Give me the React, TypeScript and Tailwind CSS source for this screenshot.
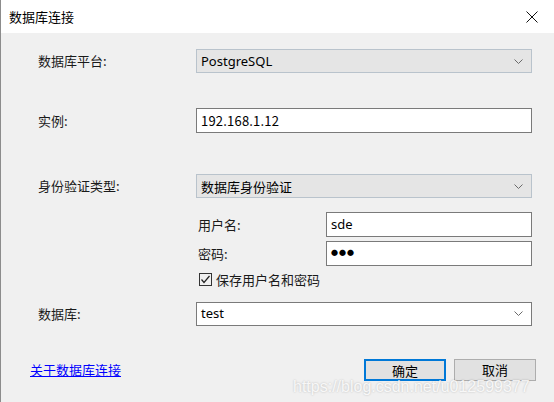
import React from 'react';

const cjk = "font-['Microsoft_YaHei','Noto_Sans_CJK_SC',sans-serif]";
const ui = "font-['Segoe_UI','Noto_Sans','Noto_Sans_CJK_SC',sans-serif]";

function Chevron() {
  return (
    <svg width="9" height="5" viewBox="0 0 9 5" className="shrink-0">
      <polyline points="0.5,0.5 4.5,4.5 8.5,0.5" fill="none" stroke="#6a6a6a" strokeWidth="1" />
    </svg>
  );
}

function Select({ value, editable, className }: { value: string; editable?: boolean; className?: string }) {
  return (
    <div
      className={`flex h-[24px] w-[336px] items-center justify-between pl-[4px] pr-[8px] text-[13px] text-black ${
        editable ? 'border border-[#7a7a7a] bg-white' : 'border border-[#b9c3cc] bg-[#e5e5e5]'
      } ${className ?? ''}`}
    >
      <span className="leading-none">{value}</span>
      <Chevron />
    </div>
  );
}

function Field({ children, width, className }: { children: React.ReactNode; width: string; className?: string }) {
  return (
    <div className={`flex h-[25px] items-center border border-[#7a7a7a] bg-white pl-[4px] text-[13px] text-black ${width} ${className ?? ''}`}>
      {children}
    </div>
  );
}

function Row({ label, children, className }: { label: string; children: React.ReactNode; className?: string }) {
  return (
    <div className={`flex items-center ${className ?? ''}`}>
      <div className={`w-[195px] shrink-0 pl-[37px] text-[13px] text-[#1a1a1a] ${cjk}`}>{label}</div>
      {children}
    </div>
  );
}

export default function App() {
  return (
    <div className={`relative h-[402px] w-[554px] overflow-hidden border-l border-[#8c8c8c] bg-[#f0f0f0] ${ui}`}>
      {/* title bar */}
      <div className="flex h-[33px] items-center justify-between bg-white pl-[8px] pr-[16px]">
        <span className={`text-[13px] text-black ${cjk}`}>数据库连接</span>
        <svg width="12" height="12" viewBox="0 0 12 12">
          <path d="M0.5 0.5 L11.5 11.5 M11.5 0.5 L0.5 11.5" stroke="#111" strokeWidth="1" />
        </svg>
      </div>

      <Row label="数据库平台:" className="mt-[16px]">
        <Select value="PostgreSQL" />
      </Row>

      <Row label="实例:" className="mt-[35px]">
        <Field width="w-[336px]">
          <span className={`tracking-[0.2px] ${cjk}`}>192.168.1.12</span>
        </Field>
      </Row>

      <Row label="身份验证类型:" className="mt-[41px]">
        <Select value="数据库身份验证" className={cjk} />
      </Row>

      {/* credentials block */}
      <div className="ml-[196px] mt-[14px] w-[335px]">
        <div className="flex items-center justify-between">
          <span className={`pl-[1px] text-[13px] text-[#1a1a1a] ${cjk}`}>用户名:</span>
          <Field width="w-[206px]">sde</Field>
        </div>
        <div className="mt-[4px] flex items-center justify-between">
          <span className={`pl-[1px] text-[13px] text-[#1a1a1a] ${cjk}`}>密码:</span>
          <Field width="w-[206px]">
            <span className="text-[7px] tracking-[1px]">●●●</span>
          </Field>
        </div>
        <div className="mt-[4px] flex items-center gap-[4px] pl-[2px]">
          <div className="flex h-[13px] w-[13px] items-center justify-center border border-[#333] bg-transparent">
            <svg width="11" height="11" viewBox="0 0 11 11">
              <polyline points="1.5,5.5 4,8.5 9.5,2" fill="none" stroke="#222" strokeWidth="1.2" />
            </svg>
          </div>
          <span className={`text-[13px] text-[#1a1a1a] ${cjk}`}>保存用户名和密码</span>
        </div>
      </div>

      <Row label="数据库:" className="mt-[12px]">
        <Select value="test" editable />
      </Row>

      {/* footer */}
      <div className="mt-[33px] flex items-center justify-between pl-[29px] pr-[18px]">
        <span className={`text-[13px] text-[#0000ff] underline ${cjk}`}>关于数据库连接</span>
        <div className="flex gap-[8px]">
          <button className={`h-[22px] w-[82px] border-2 border-[#0078d7] bg-[#e1e1e1] text-[13px] text-black ${cjk}`}>
            确定
          </button>
          <button className={`h-[22px] w-[82px] border border-[#adadad] bg-[#e1e1e1] text-[13px] text-black ${cjk}`}>
            取消
          </button>
        </div>
      </div>

      {/* blog watermark */}
      <span className="absolute left-[292px] top-[375px] font-['Liberation_Sans',sans-serif] text-[16px] text-white/85 [text-shadow:0_0_2px_rgba(0,0,0,0.25)]">
        https://blog.csdn.net/u012599377
      </span>
    </div>
  );
}
